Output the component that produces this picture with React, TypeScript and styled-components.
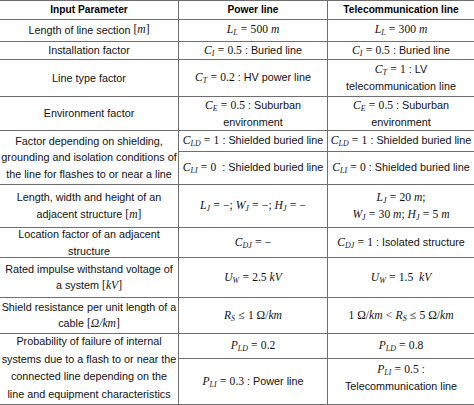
import React from "react";
import styled, { createGlobalStyle } from "styled-components";

const GlobalStyle = createGlobalStyle`
  html, body {
    margin: 0;
    padding: 0;
    background: #ffffff;
  }
`;

const Table = styled.div`
  display: grid;
  grid-template-columns: 178px 148px 146px;
  grid-template-rows: 18px 21px 17px 36px 33px 20px 32px 42px 29px 39px 35px 24px 45px;
  gap: 1px;
  padding: 1px 0 1px 0;
  width: 474px;
  background: #6f6f6f;
  font-family: "Liberation Sans", Arial, sans-serif;
  font-size: 10.8px;
  color: #111111;
`;

const Cell = styled.div<{ $span?: number; $lh?: number; $shift?: number }>`
  grid-row: span ${(p) => p.$span ?? 1};
  background: #ffffff;
  display: flex;
  align-items: center;
  justify-content: center;
  text-align: center;
  white-space: nowrap;
  line-height: ${(p) => p.$lh ?? 16.5}px;
  padding-bottom: ${(p) => p.$shift ?? 0}px;
  overflow: hidden;
`;

const Head = styled(Cell)`
  font-weight: 700;
  font-size: 10.2px;
  color: #000000;
`;

const M = styled.span`
  font-family: "Liberation Serif", "DejaVu Serif", serif;
  font-size: 11.6px;
`;

const I = styled.i`
  font-style: italic;
`;

const Sub = styled.sub`
  font-family: "Liberation Serif", "DejaVu Serif", serif;
  font-style: italic;
  font-size: 0.68em;
  vertical-align: -0.3em;
  line-height: 0;
`;

const Eq = styled.span`
  margin: 0 0.28em;
`;

function V({ v, s }: { v: string; s?: string }) {
  return (
    <M>
      <I>{v}</I>
      {s && <Sub>{s}</Sub>}
    </M>
  );
}

function Rel({ op = "=" }: { op?: string }) {
  return (
    <M>
      <Eq>{op}</Eq>
    </M>
  );
}

function Unit({ children }: { children: React.ReactNode }) {
  return (
    <M>
      [<I>{children}</I>]
    </M>
  );
}

export default function App() {
  return (
    <>
      <GlobalStyle />
      <Table>
        <Head>Input Parameter</Head>
        <Head>Power line</Head>
        <Head>Telecommunication line</Head>

        <Cell>
          Length of line section&nbsp;<Unit>m</Unit>
        </Cell>
        <Cell>
          <V v="L" s="L" />
          <Rel />
          <M>
            500 <I>m</I>
          </M>
        </Cell>
        <Cell>
          <V v="L" s="L" />
          <Rel />
          <M>
            300 <I>m</I>
          </M>
        </Cell>

        <Cell>Installation factor</Cell>
        <Cell>
          <span>
            <V v="C" s="I" />
            <Rel />
            <M>0.5</M> : Buried line
          </span>
        </Cell>
        <Cell>
          <span>
            <V v="C" s="I" />
            <Rel />
            <M>0.5</M> : Buried line
          </span>
        </Cell>

        <Cell>Line type factor</Cell>
        <Cell>
          <span>
            <V v="C" s="T" />
            <Rel />
            <M>0.2</M> : HV power line
          </span>
        </Cell>
        <Cell $lh={17.5}>
          <span>
            <V v="C" s="T" />
            <Rel />
            <M>1</M> : LV
            <br />
            telecommunication line
          </span>
        </Cell>

        <Cell>Environment factor</Cell>
        <Cell>
          <span>
            <V v="C" s="E" />
            <Rel />
            <M>0.5</M> : Suburban
            <br />
            environment
          </span>
        </Cell>
        <Cell>
          <span>
            <V v="C" s="E" />
            <Rel />
            <M>0.5</M> : Suburban
            <br />
            environment
          </span>
        </Cell>

        <Cell $span={2}>
          <span>
            Factor depending on shielding,
            <br />
            grounding and isolation conditions of
            <br />
            the line for flashes to or near a line
          </span>
        </Cell>
        <Cell>
          <span>
            <V v="C" s="LD" />
            <Rel />
            <M>1</M> : Shielded buried line
          </span>
        </Cell>
        <Cell>
          <span>
            <V v="C" s="LD" />
            <Rel />
            <M>1</M> : Shielded buried line
          </span>
        </Cell>
        <Cell>
          <span>
            <V v="C" s="LI" />
            <Rel />
            <M>0</M>&nbsp; : Shielded buried line
          </span>
        </Cell>
        <Cell>
          <span>
            <V v="C" s="LI" />
            <Rel />
            <M>0</M> : Shielded buried line
          </span>
        </Cell>

        <Cell>
          <span>
            Length, width and height of an
            <br />
            adjacent structure <Unit>m</Unit>
          </span>
        </Cell>
        <Cell>
          <span>
            <V v="L" s="J" />
            <Rel />
            <M>−;&nbsp;</M>
            <V v="W" s="J" />
            <Rel />
            <M>−;&nbsp;</M>
            <V v="H" s="J" />
            <Rel />
            <M>−</M>
          </span>
        </Cell>
        <Cell>
          <span>
            <V v="L" s="J" />
            <Rel />
            <M>
              20 <I>m</I>;
            </M>
            <br />
            <V v="W" s="J" />
            <Rel />
            <M>
              30 <I>m</I>;&nbsp;
            </M>
            <V v="H" s="J" />
            <Rel />
            <M>
              5 <I>m</I>
            </M>
          </span>
        </Cell>

        <Cell>
          <span>
            Location factor of an adjacent
            <br />
            structure
          </span>
        </Cell>
        <Cell>
          <span>
            <V v="C" s="DJ" />
            <Rel />
            <M>−</M>
          </span>
        </Cell>
        <Cell>
          <span>
            <V v="C" s="DJ" />
            <Rel />
            <M>1</M> : Isolated structure
          </span>
        </Cell>

        <Cell>
          <span>
            Rated impulse withstand voltage of
            <br />a system <Unit>kV</Unit>
          </span>
        </Cell>
        <Cell>
          <span>
            <V v="U" s="W" />
            <Rel />
            <M>
              2.5 <I>kV</I>
            </M>
          </span>
        </Cell>
        <Cell>
          <span>
            <V v="U" s="W" />
            <Rel />
            <M>
              1.5&nbsp; <I>kV</I>
            </M>
          </span>
        </Cell>

        <Cell>
          <span>
            Shield resistance per unit length of a
            <br />
            cable <Unit>Ω/km</Unit>
          </span>
        </Cell>
        <Cell>
          <span>
            <V v="R" s="S" />
            <Rel op="≤" />
            <M>
              1 Ω/<I>km</I>
            </M>
          </span>
        </Cell>
        <Cell>
          <span>
            <M>
              1 Ω/<I>km</I>
            </M>
            <Rel op="<" />
            <V v="R" s="S" />
            <Rel op="≤" />
            <M>
              5 Ω/<I>km</I>
            </M>
          </span>
        </Cell>

        <Cell $span={2} $lh={17.5} $shift={2}>
          <span>
            Probability of failure of internal
            <br />
            systems due to a flash to or near the
            <br />
            connected line depending on the
            <br />
            line and equipment characteristics
          </span>
        </Cell>
        <Cell>
          <span>
            <V v="P" s="LD" />
            <Rel />
            <M>0.2</M>
          </span>
        </Cell>
        <Cell>
          <span>
            <V v="P" s="LD" />
            <Rel />
            <M>0.8</M>
          </span>
        </Cell>
        <Cell>
          <span>
            <V v="P" s="LI" />
            <Rel />
            <M>0.3</M> : Power line
          </span>
        </Cell>
        <Cell $lh={17} $shift={8}>
          <span>
            <V v="P" s="LI" />
            <Rel />
            <M>0.5</M> :
            <br />
            Telecommunication line
          </span>
        </Cell>
      </Table>
    </>
  );
}
